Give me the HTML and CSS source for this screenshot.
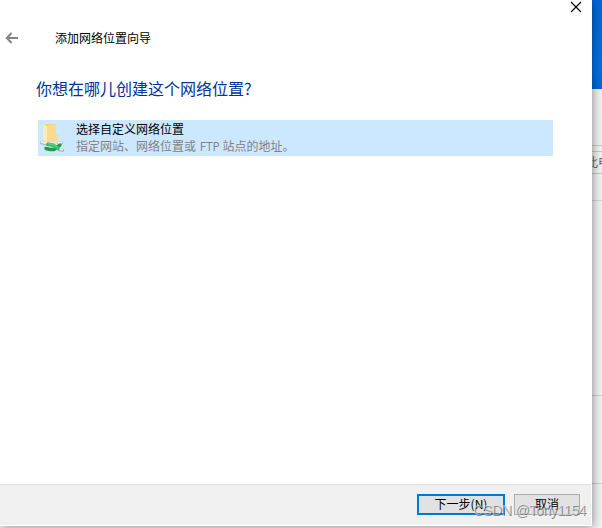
FILE: index.html
```html
<!DOCTYPE html>
<html lang="zh-CN">
<head>
<meta charset="utf-8">
<title>添加网络位置向导</title>
<link rel="stylesheet" href="styles.css">
</head>
<body>
<div class="desktop">
  <div class="explorer">
    <div class="wallpaper"></div>
    <div class="ribbon"></div>
    <div class="address"><span>此电脑</span></div>
    <div class="toolbar"></div>
    <div class="files"></div>
    <div class="group"></div>
    <div class="rest"></div>
  </div>
  <main class="wizard">
    <header class="titlebar">
      <svg class="close" width="12" height="12" viewBox="0 0 12 12"><path d="M1 1l10 10M11 1L1 11" stroke="#000" stroke-width="1.15" fill="none"/></svg>
    </header>
    <div class="nav">
      <svg class="back" width="14" height="12" viewBox="0 0 14 12"><path d="M6.6 1L1.8 6l4.8 5M2 6h11" fill="none" stroke="#858585" stroke-width="2"/></svg>
      <span class="name">添加网络位置向导</span>
    </div>
    <h1 class="heading">你想在哪儿创建这个网络位置?</h1>
    <section class="option">
      <svg class="folder" width="29" height="32" viewBox="0 0 29 32">
        <path d="M5 2h12v10l1.500 1v6l-1 1H5z" fill="#f3d27a"/>
        <path d="M8 4l9-1.500v10l1.500 1V19l-1 1H8z" fill="#fbdb89"/>
        <path d="M4.500 2L8 4.500V22l-3.500-2z" fill="#ffecb5"/>
        <path d="M2.500 20.500l6 1.500M20 27.500l3.500.7M20 21.500l2.500-.8" stroke="#a9b6bd" stroke-width="3.400" stroke-linecap="round"/>
        <path d="M2.500 20l5.500 1.300M20.500 27l2.500.5M20 21l2.500-.7" stroke="#f0f4f6" stroke-width="2" stroke-linecap="round"/>
        <path d="M7 26.500l4 1h4l6-4.500" fill="none" stroke="#209b45" stroke-width="3.400" stroke-linecap="round"/>
        <path d="M9 22.300l5 1 5 3" fill="none" stroke="#34bd59" stroke-width="3.600" stroke-linecap="round"/>
        <path d="M9 21.600l5 .9 5 2.800" fill="none" stroke="#5dd47a" stroke-width="1.200"/>
      </svg>
      <div class="copy">
        <div class="label">选择自定义网络位置</div>
        <div class="detail">指定网站、网络位置或 <span class="latin">FTP</span> 站点的地址。</div>
      </div>
    </section>
    <footer class="actions">
      <button class="btn primary">下一步(N)</button>
      <button class="btn">取消</button>
    </footer>
  </main>
  <div class="watermark">CSDN @Tony1154</div>
</div>
</body>
</html>
```
FILE: styles.css
```css
* { box-sizing: border-box; }
body { margin: 0; background: #efefef; font: 12px/16px "Noto Sans CJK SC", sans-serif; color: #000; }
.desktop { position: relative; width: 602px; height: 528px; overflow: hidden; }
.explorer { width: 602px; height: 528px; padding-left: 582px; background: #f1f1f1; display: flex; flex-direction: column; }
.wallpaper { height: 89px; background: linear-gradient(#0068d8, #0070e0 80%, #0068d4); }
.ribbon { height: 57px; border-bottom: 1px solid #c8c8c8; }
.address { height: 23px; margin-top: 5px; border: 1px solid #c8c8c8; border-width: 1px 0; color: #666; line-height: 20px; white-space: nowrap; padding-left: 4px; overflow: hidden; }
.toolbar { height: 27px; border-bottom: 1px solid #d4d4d4; }
.files { height: 195px; border-bottom: 1px solid #cfcfcf; }
.group { height: 88px; border-bottom: 1px solid #cfcfcf; }
.rest { flex: 1; }
.wizard { position: absolute; left: 0; top: 0; width: 592px; height: 526px; background: #fff; box-shadow: 1px 1px 9px rgba(0, 0, 0, .4); display: flex; flex-direction: column; }
.titlebar { height: 28px; display: flex; justify-content: flex-end; padding: 1px 10px 0 0; }
.nav { display: flex; align-items: center; height: 20px; padding-left: 5px; }
.name { margin-left: 36px; line-height: 20px; }
.heading { margin: 28px 0 0 36px; font-size: 16px; font-weight: 400; line-height: 24px; color: #003399; white-space: nowrap; }
.option { width: 515px; height: 36px; margin: 20px 0 0 38px; padding: 2px 0 0 1px; background: #cce8ff; display: flex; }
.copy { margin-left: 8px; line-height: 17px; margin-top: -2px; white-space: nowrap; }
.detail { color: #838383; }
.latin { font-family: "Open Sans", sans-serif; margin-left: 1px; }
.actions { margin: auto 1px 1px 0; height: 41px; background: #f0f0f0; border-top: 1px solid #dfdfdf; display: flex; justify-content: flex-end; gap: 9px; padding: 9px 11px 0 0; }
.btn { width: 66px; height: 21px; padding: 0 0 2px; border: 1px solid #adadad; background: #e1e1e1; font: inherit; line-height: 16px; color: #000; }
.primary { width: 88px; border: 2px solid #0078d7; }
.watermark { position: absolute; left: 473px; top: 502px; font: 14px/16px "Liberation Sans", sans-serif; letter-spacing: -.33px; color: rgba(235, 235, 235, .5); text-shadow: 1px 1px 0 rgba(90, 90, 90, .7); white-space: nowrap; }
```
